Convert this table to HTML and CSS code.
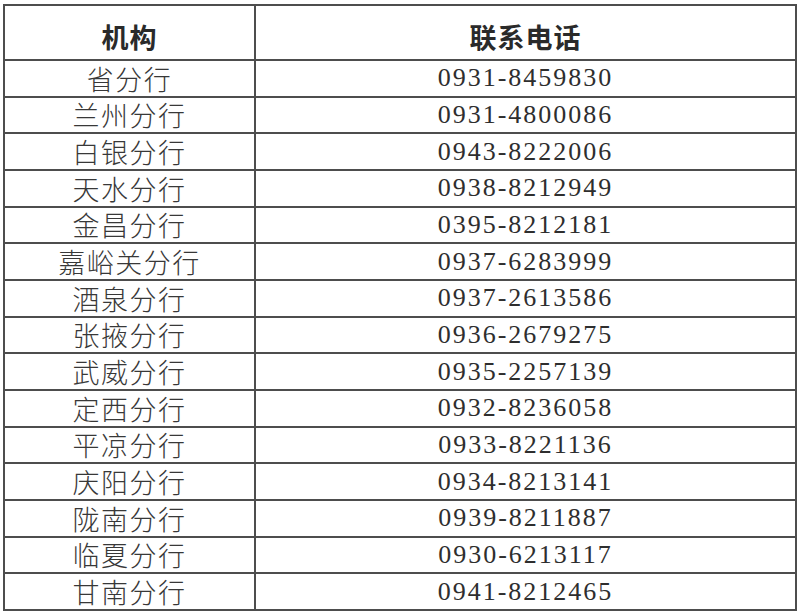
FILE: index.html
```html
<!DOCTYPE html>
<html lang="zh">
<head>
<meta charset="utf-8">
<link rel="stylesheet" href="styles.css">
</head>
<body>
<table class="contacts">
  <colgroup><col class="col-org"><col class="col-tel"></colgroup>
  <thead>
    <tr class="head"><th>机构</th><th>联系电话</th></tr>
  </thead>
  <tbody>
    <tr><td class="org">省分行</td><td class="tel">0931-8459830</td></tr>
    <tr><td class="org">兰州分行</td><td class="tel">0931-4800086</td></tr>
    <tr><td class="org">白银分行</td><td class="tel">0943-8222006</td></tr>
    <tr><td class="org">天水分行</td><td class="tel">0938-8212949</td></tr>
    <tr><td class="org">金昌分行</td><td class="tel">0395-8212181</td></tr>
    <tr><td class="org">嘉峪关分行</td><td class="tel">0937-6283999</td></tr>
    <tr><td class="org">酒泉分行</td><td class="tel">0937-2613586</td></tr>
    <tr><td class="org">张掖分行</td><td class="tel">0936-2679275</td></tr>
    <tr><td class="org">武威分行</td><td class="tel">0935-2257139</td></tr>
    <tr><td class="org">定西分行</td><td class="tel">0932-8236058</td></tr>
    <tr><td class="org">平凉分行</td><td class="tel">0933-8221136</td></tr>
    <tr><td class="org">庆阳分行</td><td class="tel">0934-8213141</td></tr>
    <tr><td class="org">陇南分行</td><td class="tel">0939-8211887</td></tr>
    <tr><td class="org">临夏分行</td><td class="tel">0930-6213117</td></tr>
    <tr><td class="org">甘南分行</td><td class="tel">0941-8212465</td></tr>
  </tbody>
</table>
</body>
</html>
```

FILE: styles.css
```css
html, body {
  margin: 0;
  padding: 0;
  background: #ffffff;
}

body {
  padding: 4px 0 0 3px;
  font-family: "Noto Sans CJK SC", "Noto Sans", sans-serif;
  color: #383838;
}

.contacts {
  border-collapse: collapse;
  table-layout: fixed;
  width: 792px;
}

.col-org { width: 251px; }
.col-tel { width: 541px; }

.contacts th,
.contacts td {
  border: 2px solid #4d4d4d;
  padding: 0;
  text-align: center;
  vertical-align: middle;
  white-space: nowrap;
}

.head th {
  height: 55px;
  padding-top: 8px;
  box-sizing: border-box;
  font-size: 27px;
  font-weight: 700;
  color: #2a2a2a;
  letter-spacing: 1px;
}

.contacts tbody tr {
  height: 36.67px;
}

.org {
  font-size: 27px;
  font-weight: 300;
  letter-spacing: 1.5px;
  padding-top: 11px;
  line-height: 23px;
}

.tel {
  font-family: "Liberation Serif", "Times New Roman", serif;
  font-size: 26px;
  letter-spacing: 2px;
  padding-top: 10px;
  line-height: 24px;
  color: #2e2e2e;
}
```
